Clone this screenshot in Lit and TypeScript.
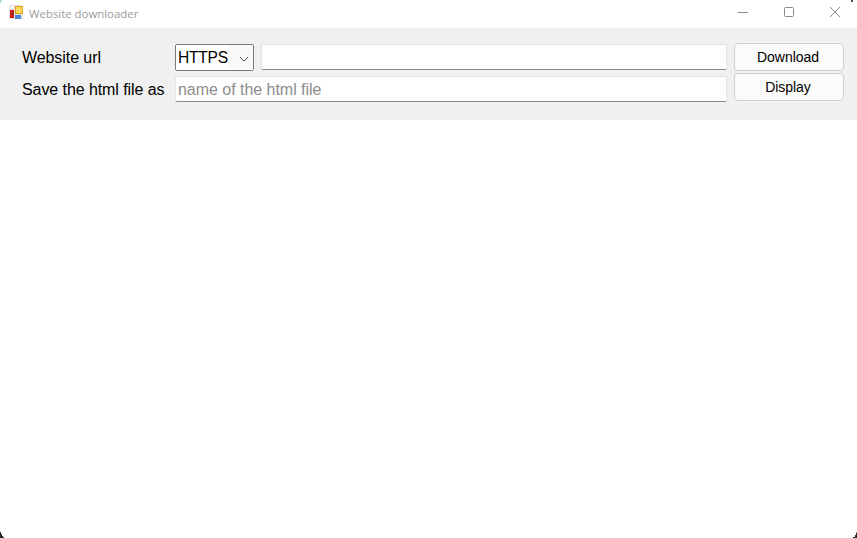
import { LitElement, html, css } from "lit";
import { customElement } from "lit/decorators.js";

@customElement("app-root")
export class AppRoot extends LitElement {
  static styles = css`
    :host { display: block; width: 857px; height: 538px; background: #fff; overflow: hidden; font-family: "Liberation Sans", Arial, sans-serif; color: #000; position: relative; }
    .titlebar { height: 28px; display: flex; align-items: center; background: #fff; }
    .app-icon { width: 14px; height: 14px; margin: -4px 0 0 9px; flex: none; }
    .title { margin-left: 6px; font: 11.4px "Open Sans", "Noto Sans", sans-serif; color: #9a9a9a; flex: 1; position: relative; top: -1px; }
    .win { width: 46px; height: 28px; display: flex; align-items: center; justify-content: center; flex: none; }
    .win svg { width: 12px; height: 12px; position: relative; top: -2px; }
    .winbtns { display: flex; margin-right: -1px; }
    .panel { height: 92px; box-sizing: border-box; background: #f0f0f0; padding: 15px 13px 0 22px; display: grid; grid-template-columns: 153px 79px 473px 117px; grid-template-rows: 30px 30px; }
    .label { font-size: 16px; letter-spacing: -0.08px; display: flex; align-items: center; height: 28px; padding-top: 2px; box-sizing: border-box; white-space: nowrap; }
    .label.lower { margin-top: 2px; }
    .combo { grid-column: 2; height: 27px; margin-top: 1px; box-sizing: border-box; border: 1px solid #7a7a7a; border-radius: 2px; background: #fff; display: flex; align-items: center; padding-left: 2px; font-size: 15.6px; letter-spacing: -0.25px; }
    .combo .val { flex: 1; }
    .chev { width: 26px; height: 25px; background: #f9f9f9; display: flex; align-items: center; justify-content: center; padding-left: 8px; padding-top: 2px; box-sizing: border-box; }
    .chev svg { width: 10px; height: 6px; }
    .field { height: 26px; box-sizing: border-box; background: #fff; border: 1px solid #e3e3e3; border-bottom: 1px solid #8a8a8a; border-radius: 2px; font-size: 16px; letter-spacing: -0.03px; display: flex; align-items: center; padding: 1px 0 0 2px; color: #8c8c8c; white-space: nowrap; }
    .url { margin: 1px 0 0 7px; width: 466px; }
    .name { grid-column: 2 / 4; margin-top: 3px; width: 552px; }
    .btn { width: 110px; height: 28px; box-sizing: border-box; border: 1px solid #d0d0d0; border-radius: 4px; background: #fbfbfb; font-size: 14px; letter-spacing: -0.05px; display: flex; align-items: center; justify-content: center; margin-left: 7px; padding-right: 2px; }
    .content { height: 418px; background: #fff; }
    .corner { position: absolute; width: 5px; height: 6px; }
    .bl { left: 0; bottom: 0; }
    .br { right: 0; bottom: 0; }
    .tl { left: 0; top: 0; }
    .tr { right: 2px; top: 0; }
  `;

  render() {
    return html`
      <div class="titlebar">
        <svg class="app-icon" viewBox="0 0 14 14">
          <rect x="0" y="0" width="14" height="14" fill="#e2e2e2"/>
          <rect x="1" y="1" width="4" height="3" fill="#f6f6f6"/>
          <rect x="6" y="1" width="8" height="8" fill="#e0a418"/>
          <rect x="7" y="2" width="6" height="6" fill="#fbd65a"/>
          <rect x="1" y="5" width="4" height="8" fill="#cc1f1a"/>
          <rect x="3" y="7" width="2" height="3" fill="#8e2a20"/>
          <rect x="6" y="10" width="6" height="4" fill="#4a86dc"/>
        </svg>
        <div class="title">Website downloader</div>
        <div class="winbtns">
          <div class="win"><svg viewBox="0 0 12 12"><path d="M1 6.5h10" stroke="#8a8a8a" fill="none"/></svg></div>
          <div class="win"><svg viewBox="0 0 12 12"><rect x="1.5" y="1.5" width="9" height="9" rx="1" stroke="#8a8a8a" fill="none"/></svg></div>
          <div class="win"><svg viewBox="0 0 12 12"><path d="M1 1l10 10M11 1L1 11" stroke="#8a8a8a" fill="none"/></svg></div>
        </div>
      </div>
      <div class="panel">
        <div class="label">Website url</div>
        <div class="combo"><span class="val">HTTPS</span><span class="chev"><svg viewBox="0 0 10 6"><path d="M1 1l4 4 4-4" stroke="#555" fill="none"/></svg></span></div>
        <div class="field url"></div>
        <div class="btn">Download</div>
        <div class="label lower">Save the html file as</div>
        <div class="field name">name of the html file</div>
        <div class="btn">Display</div>
      </div>
      <div class="content"></div>
      <svg class="corner bl" viewBox="0 0 5 6"><path d="M0 0h1v2h1v2h1v1h1v1H0z" fill="#2a2a2a"/></svg>
      <svg class="corner br" viewBox="0 0 5 6"><path d="M5 0v6H1V5h2V3h1V1z" fill="#2a2a2a"/></svg>
      <svg class="corner tl" viewBox="0 0 5 6"><path d="M0 0h2v1H1v2H0z" fill="#a8d8b0"/></svg>
      <svg class="corner tr" viewBox="0 0 5 6"><path d="M1 0h2v2H1z" fill="#555"/></svg>
    `;
  }
}
